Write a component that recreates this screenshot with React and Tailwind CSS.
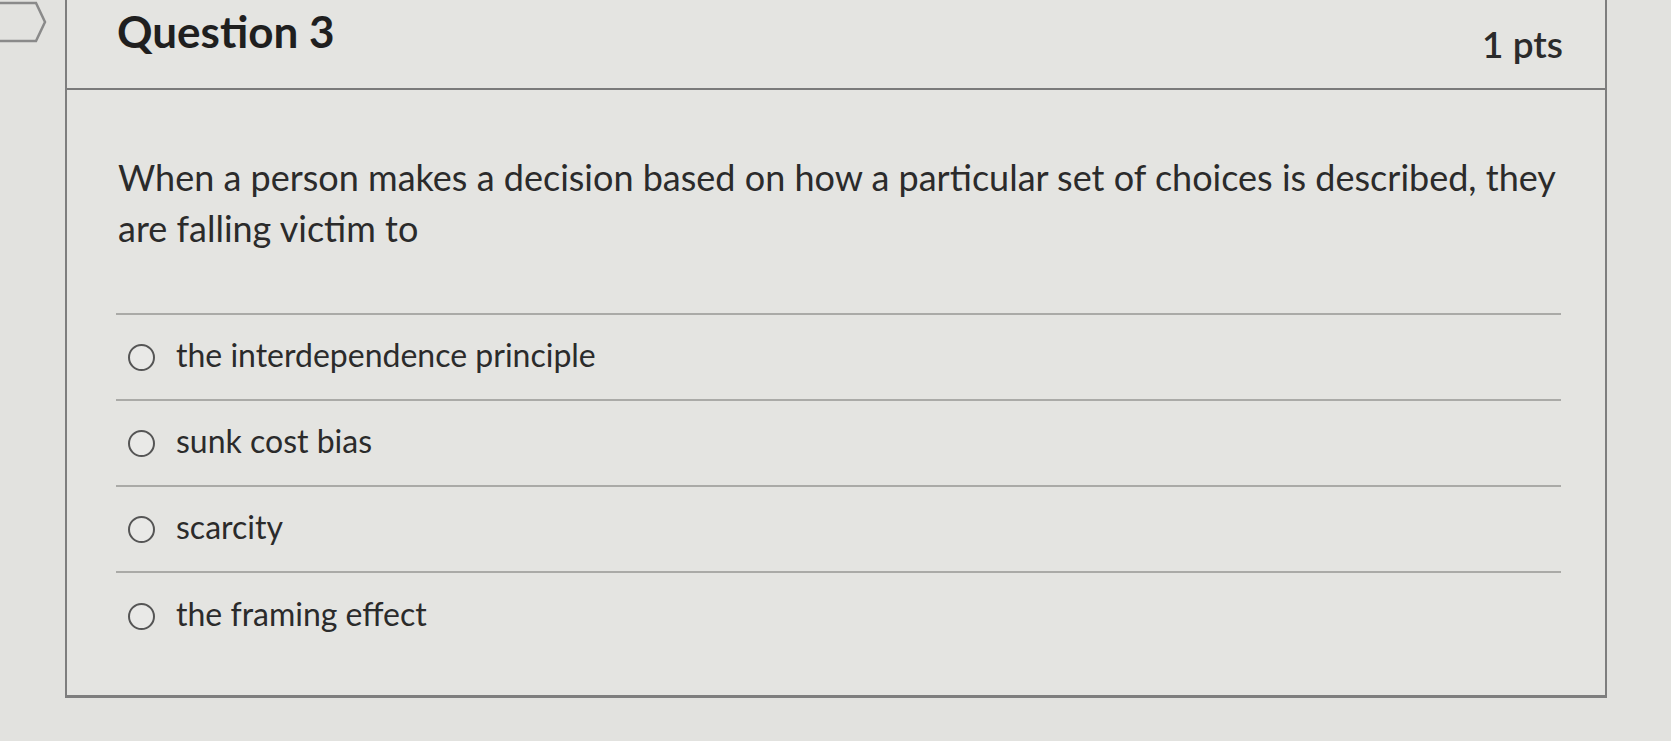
import React from "react";

const options = [
  "the interdependence principle",
  "sunk cost bias",
  "scarcity",
  "the framing effect",
];

const App = () => {
  return (
    <div
      className="w-[1671px] h-[741px] bg-[#e2e2df] flex overflow-hidden text-[#2b2b2b]"
      style={{ fontFamily: "Lato, 'Open Sans', sans-serif" }}
    >
      {/* flag column */}
      <div className="w-[65px] shrink-0">
        <svg width="48" height="44" viewBox="0 0 48 44">
          <path
            d="M-4 3 H36 L45 22 L36 41 H-4"
            fill="none"
            stroke="#8a8a8a"
            strokeWidth="2.5"
          />
        </svg>
      </div>

      {/* question panel */}
      <div className="w-[1542px] h-[698px] shrink-0 border-x-2 border-b-[3px] border-[#7e7e7e] bg-[#e4e4e1] flex flex-col">
        {/* header */}
        <div className="h-[90px] shrink-0 border-b-2 border-[#7a7a7a] flex justify-between pl-[50px] pr-[42px]">
          <h2 className="text-[44px] font-bold leading-none pt-[9px] text-[#1f1f1f]">
            Question 3
          </h2>
          <div className="text-[37px] font-semibold leading-none pt-[25px] text-[#2b2b2b]">
            1 pts
          </div>
        </div>

        {/* body */}
        <div className="flex flex-col pl-[49px] pr-[44px] pt-[62px]">
          <p className="text-[36px] leading-[51px] pb-[59px] pl-[2px]">
            When a person makes a decision based on how a particular set of
            choices is described, they are falling victim to
          </p>

          <div className="border-t-2 border-[#aaaaa7]">
            {options.map((opt, i) => (
              <div
                key={opt}
                className={`h-[86px] flex items-center gap-[21px] pl-[12px] ${
                  i < options.length - 1 ? "border-b-2 border-[#aaaaa7]" : ""
                }`}
              >
                <span className="w-[27px] h-[27px] rounded-full border-[2.5px] border-[#555555] bg-[#e9e9e7] shrink-0" />
                <span className="text-[32px] leading-none pb-[4px]">{opt}</span>
              </div>
            ))}
          </div>
        </div>
      </div>
    </div>
  );
};

export default App;
